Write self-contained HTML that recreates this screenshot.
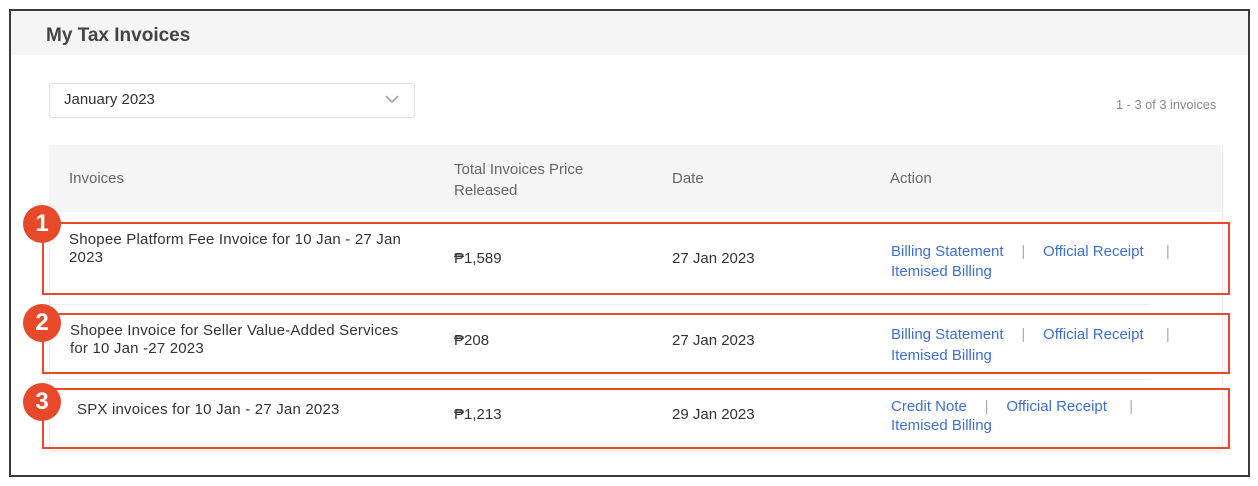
<!DOCTYPE html>
<html><head><style>
body{margin:0;width:1258px;height:486px;background:#fff;font-family:"Liberation Sans",Arial,sans-serif;position:relative;overflow:hidden}
.a{position:absolute}
.frame{left:9px;top:9px;width:1237px;height:464px;border:2px solid #3a3a3a;background:#fff}
.hdr{left:11px;top:11px;width:1237px;height:44px;background:#f5f5f5}
.t{font-size:15px;color:#333}
.lnk{color:#3d6fd6;font-size:15px}
.sep{color:#aaa;font-size:15px}
.rb{border:2px solid #e8492b;box-sizing:border-box}
.c{width:38px;height:38px;border-radius:50%;background:#e8492b;color:#fff;font-size:24px;font-weight:bold;text-align:center;line-height:38px}
.th{font-size:15px;color:#666}
</style></head><body>
<div class="a frame"></div>
<div class="a hdr"></div>
<div class="a" style="left:46px;top:25px;font-size:19px;color:#444;font-weight:bold">My Tax Invoices</div>
<div class="a" style="left:49px;top:83px;width:364px;height:33px;border:1px solid #e3e3e3;border-radius:3px"></div>
<div class="a t" style="left:64px;top:91px">January 2023</div>
<svg class="a" style="left:385px;top:94px" width="14" height="10"><path d="M1 2 L7 8 L13 2" stroke="#999" stroke-width="1.4" fill="none"/></svg>
<div class="a" style="left:1116px;top:97px;font-size:12.8px;color:#888">1 - 3 of 3 invoices</div>
<div class="a" style="left:49px;top:145px;width:1172px;height:304px;border:1px solid #eee;border-radius:3px;box-shadow:0 1px 3px rgba(0,0,0,.06)"></div>
<div class="a" style="left:49px;top:145px;width:1172px;height:67px;background:#f5f5f5"></div>
<div class="a th" style="left:69px;top:170px">Invoices</div>
<div class="a th" style="left:454px;top:159px;line-height:21px">Total Invoices Price<br>Released</div>
<div class="a th" style="left:672px;top:170px">Date</div>
<div class="a th" style="left:890px;top:170px">Action</div>
<div class="a" style="left:49px;top:304px;width:1102px;height:1px;background:#eee"></div>
<div class="a" style="left:49px;top:379px;width:1102px;height:1px;background:#eee"></div>

<div class="a rb" style="left:42px;top:222px;width:1188px;height:73px"></div>
<div class="a rb" style="left:42px;top:313px;width:1188px;height:61px"></div>
<div class="a rb" style="left:42px;top:388px;width:1188px;height:61px"></div>
<div class="a c" style="left:23px;top:205px">1</div>
<div class="a c" style="left:23px;top:304px">2</div>
<div class="a c" style="left:23px;top:383px">3</div>

<div class="a t" style="left:69px;top:231px;line-height:18px;letter-spacing:0.2px">Shopee Platform Fee Invoice for 10 Jan - 27 Jan<br>2023</div>
<div class="a t" style="left:454px;top:250px">₱1,589</div>
<div class="a t" style="left:672px;top:250px">27 Jan 2023</div>
<div class="a" style="left:891px;top:242px;line-height:20px"><span class="lnk">Billing Statement</span>&nbsp;&nbsp;&nbsp;&nbsp;<span class="sep">|</span>&nbsp;&nbsp;&nbsp;&nbsp;<span class="lnk">Official Receipt</span>&nbsp;&nbsp;&nbsp;&nbsp;&nbsp;<span class="sep">|</span><br><span class="lnk">Itemised Billing</span></div>

<div class="a t" style="left:70px;top:322px;line-height:18px;letter-spacing:0.2px">Shopee Invoice for Seller Value-Added Services<br>for 10 Jan -27 2023</div>
<div class="a t" style="left:454px;top:332px">₱208</div>
<div class="a t" style="left:672px;top:332px">27 Jan 2023</div>
<div class="a" style="left:891px;top:324px;line-height:21px"><span class="lnk">Billing Statement</span>&nbsp;&nbsp;&nbsp;&nbsp;<span class="sep">|</span>&nbsp;&nbsp;&nbsp;&nbsp;<span class="lnk">Official Receipt</span>&nbsp;&nbsp;&nbsp;&nbsp;&nbsp;<span class="sep">|</span><br><span class="lnk">Itemised Billing</span></div>

<div class="a t" style="left:77px;top:401px;letter-spacing:0.2px">SPX invoices for 10 Jan - 27 Jan 2023</div>
<div class="a t" style="left:454px;top:406px">₱1,213</div>
<div class="a t" style="left:672px;top:406px">29 Jan 2023</div>
<div class="a" style="left:891px;top:397px;line-height:19px"><span class="lnk">Credit Note</span>&nbsp;&nbsp;&nbsp;&nbsp;<span class="sep">|</span>&nbsp;&nbsp;&nbsp;&nbsp;<span class="lnk">Official Receipt</span>&nbsp;&nbsp;&nbsp;&nbsp;&nbsp;<span class="sep">|</span><br><span class="lnk">Itemised Billing</span></div>
</body></html>
